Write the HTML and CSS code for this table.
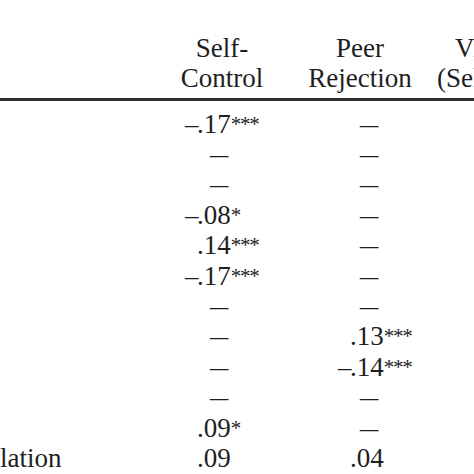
FILE: index.html
```html
<!DOCTYPE html>
<html>
<head>
<meta charset="utf-8">
<link rel="stylesheet" href="styles.css">
</head>
<body>
<div class="table">
  <div class="head">
    <div class="hrow">
      <div class="lab"></div>
      <div class="hc">Self-<br>Control</div>
      <div class="hc">Peer<br>Rejection</div>
      <div class="hc3"><span class="l1">Victimization</span><span class="l2">(Self-Report)</span></div>
    </div>
  </div>
  <div class="rule"></div>
  <div class="body">
    <div class="row"><div class="lab"></div><div class="c1"><span class="num"><span class="sg">–</span>.17<span class="st">***</span></span></div><div class="c2"><span class="dash">–</span></div></div>
    <div class="row"><div class="lab"></div><div class="c1"><span class="dash">–</span></div><div class="c2"><span class="dash">–</span></div></div>
    <div class="row"><div class="lab"></div><div class="c1"><span class="dash">–</span></div><div class="c2"><span class="dash">–</span></div></div>
    <div class="row"><div class="lab"></div><div class="c1"><span class="num"><span class="sg">–</span>.08<span class="st">*</span></span></div><div class="c2"><span class="dash">–</span></div></div>
    <div class="row"><div class="lab"></div><div class="c1"><span class="num">.14<span class="st">***</span></span></div><div class="c2"><span class="dash">–</span></div></div>
    <div class="row"><div class="lab"></div><div class="c1"><span class="num"><span class="sg">–</span>.17<span class="st">***</span></span></div><div class="c2"><span class="dash">–</span></div></div>
    <div class="row"><div class="lab"></div><div class="c1"><span class="dash">–</span></div><div class="c2"><span class="dash">–</span></div></div>
    <div class="row"><div class="lab"></div><div class="c1"><span class="dash">–</span></div><div class="c2"><span class="num">.13<span class="st">***</span></span></div></div>
    <div class="row"><div class="lab"></div><div class="c1"><span class="dash">–</span></div><div class="c2"><span class="num"><span class="sg">–</span>.14<span class="st">***</span></span></div></div>
    <div class="row"><div class="lab"></div><div class="c1"><span class="dash">–</span></div><div class="c2"><span class="dash">–</span></div></div>
    <div class="row"><div class="lab"></div><div class="c1"><span class="num">.09<span class="st">*</span></span></div><div class="c2"><span class="dash">–</span></div></div>
    <div class="row"><div class="lab">lation</div><div class="c1"><span class="num">.09</span></div><div class="c2"><span class="num">.04</span></div></div>
  </div>
</div>
</body>
</html>
```

FILE: styles.css
```css
html, body {
  margin: 0;
  padding: 0;
  background: #ffffff;
  overflow: hidden;
}
body {
  width: 474px;
  height: 474px;
  font-family: "Liberation Serif", "Times New Roman", serif;
  font-size: 27px;
  color: #1e1e1e;
}
.table {
  padding-top: 33px;
}
.hrow, .row {
  display: grid;
  grid-template-columns: 152px 140px 136px 1fr;
  white-space: nowrap;
}
.hrow {
  line-height: 30px;
}
.hc {
  text-align: center;
}
.hc3 {
  overflow: hidden;
  display: flex;
  flex-direction: column;
}
.hc3 .l1 {
  padding-left: 27px;
}
.hc3 .l2 {
  padding-left: 9px;
}
.rule {
  margin-top: 5px;
  height: 3px;
  background: #2e2e2e;
}
.body {
  padding-top: 7.7px;
}
.row {
  height: 30.4px;
  line-height: 30.4px;
}
.c1 .num {
  padding-left: 45px;
}
.c2 .num {
  padding-left: 58px;
}
.c1 .dash {
  margin-left: 58px;
}
.c2 .dash {
  margin-left: 68px;
}
.num {
  display: inline-block;
}
.sg {
  display: inline-block;
  width: 12px;
  margin-left: -12px;
  text-align: right;
  letter-spacing: -1px;
}
.st {
  font-size: 21px;
  vertical-align: 2px;
  letter-spacing: -1.3px;
}
.dash {
  display: inline-block;
  transform: scaleX(1.35);
  transform-origin: left center;
}
```
